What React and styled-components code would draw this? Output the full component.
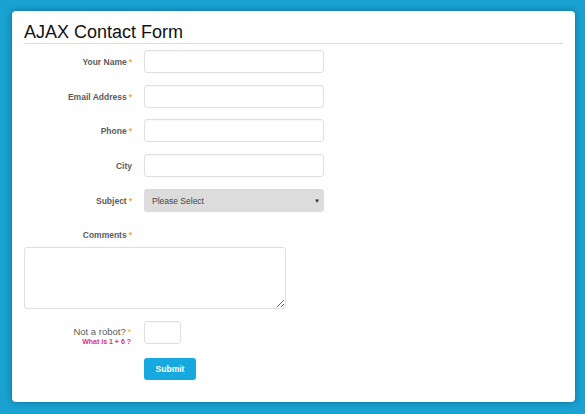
import styled, { createGlobalStyle } from 'styled-components';

const GlobalStyle = createGlobalStyle`
  html, body {
    margin: 0;
    padding: 0;
    background: #19a2d2;
  }
  body {
    font-family: "Liberation Sans", Arial, sans-serif;
  }
`;

const Page = styled.div`
  width: 585px;
  height: 414px;
  padding: 11px 10px 12px 12px;
  box-sizing: border-box;
  background: #19a2d2;
`;

const Card = styled.div`
  height: 100%;
  background: #fff;
  border-radius: 4px;
  box-shadow: 0 0 7px rgba(0, 40, 70, 0.45);
  padding: 11px 12px 0 12px;
  box-sizing: border-box;
`;

const Title = styled.h1`
  margin: 0 0 6px 0;
  font-size: 18px;
  line-height: 21px;
  font-weight: normal;
  color: #111;
  border-bottom: 1px solid #dcdcdc;
`;

const Row = styled.div`
  display: grid;
  grid-template-columns: 108px 180px;
  column-gap: 12px;
  align-items: ${p => p.$align || 'center'};
  margin-bottom: ${p => p.$mb ?? 12}px;
`;

const Label = styled.label`
  text-align: right;
  font-size: ${p => (p.$plain ? 9.5 : 8.5)}px;
  font-weight: ${p => (p.$plain ? 'normal' : 'bold')};
  color: #5c5c5c;
  line-height: 10px;
`;

const Star = styled.span`
  color: #f0a830;
  margin-left: 2px;
  font-size: 8.5px;
`;

const RobotLabel = styled.div`
  padding-top: 6px;
  padding-right: 1px;
`;

const Hint = styled.div`
  text-align: right;
  font-size: 7px;
  font-weight: bold;
  color: #e0307f;
  line-height: 9px;
`;

const Input = styled.input`
  width: ${p => p.$w || 180}px;
  height: 23px;
  box-sizing: border-box;
  border: 1px solid #e0e0e0;
  border-radius: 3px;
  box-shadow: inset 0 1px 2px rgba(0, 0, 0, 0.04);
  background: #fff;
  margin: 0;
`;

const SelectBox = styled.div`
  width: 180px;
  height: 23px;
  box-sizing: border-box;
  background: #dcdcdc;
  border-radius: 3px;
  display: flex;
  align-items: center;
  padding-left: 8px;
  font-size: 8.5px;
  color: #444;
`;

const Caret = styled.span`
  margin-left: auto;
  margin-right: 4px;
  font-size: 6px;
  color: #333;
`;

const TextArea = styled.textarea`
  display: block;
  width: 262px;
  height: 62px;
  box-sizing: border-box;
  border: 1px solid #e0e0e0;
  border-radius: 3px;
  margin: 0 0 12px 0;
  resize: both;
`;

const Submit = styled.button`
  width: 52px;
  height: 22px;
  border: none;
  border-radius: 3px;
  background: #16a8de;
  color: #fff;
  font-family: "Liberation Sans", Arial, sans-serif;
  font-size: 8.5px;
  font-weight: bold;
  padding: 0;
`;

const Field = ({ label, required, children, mb }) => (
  <Row $mb={mb}>
    <Label>
      {label}
      {required && <Star>*</Star>}
    </Label>
    {children}
  </Row>
);

export default function App() {
  return (
    <>
      <GlobalStyle />
      <Page>
        <Card>
          <Title>AJAX Contact Form</Title>
          <Field label="Your Name" required><Input /></Field>
          <Field label="Email Address" required mb={11}><Input /></Field>
          <Field label="Phone" required><Input /></Field>
          <Field label="City" required={false}><Input /></Field>
          <Field label="Subject" required mb={18}>
            <SelectBox>
              Please Select
              <Caret>▼</Caret>
            </SelectBox>
          </Field>
          <Field label="Comments" required mb={7}><span /></Field>
          <TextArea />
          <Row $mb={12} $align="start">
            <RobotLabel>
              <Label as="div" $plain>
                Not a robot?<Star>*</Star>
              </Label>
              <Hint>What is 1 + 6 ?</Hint>
            </RobotLabel>
            <Input $w={37} />
          </Row>
          <Row>
            <span />
            <Submit>Submit</Submit>
          </Row>
        </Card>
      </Page>
    </>
  );
}
